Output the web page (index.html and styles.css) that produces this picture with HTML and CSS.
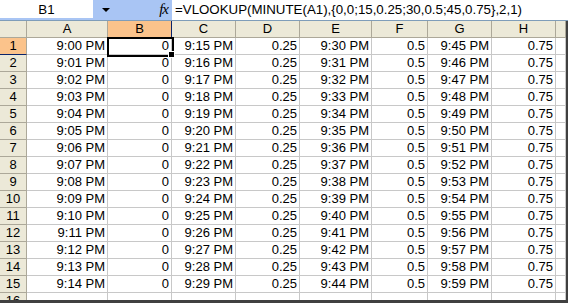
FILE: index.html
```html
<!DOCTYPE html>
<html lang="en">
<head>
    <meta charset="UTF-8">
    <title>Book1 - VLOOKUP minutes</title>
    <link rel="stylesheet" href="styles.css">
</head>
<body>
    <div class="formula-bar">
        <div class="name-box">B1</div>
        <div class="name-drop"><span class="arrow"></span></div>
        <div class="fx">fx</div>
        <div class="formula">=VLOOKUP(MINUTE(A1),{0,0;15,0.25;30,0.5;45,0.75},2,1)</div>
    </div>

    <div class="sheet" id="sheet">
        <div class="corner"></div>
        <div class="col-head">A</div>
        <div class="col-head selected">B</div>
        <div class="col-head">C</div>
        <div class="col-head">D</div>
        <div class="col-head">E</div>
        <div class="col-head">F</div>
        <div class="col-head">G</div>
        <div class="col-head">H</div>
        <div class="col-head"></div>
    </div>

    <script>
        // build the 15 data rows plus the clipped 16th
        const sheet = document.getElementById('sheet');
        const values = [0, 0.25, 0.5, 0.75];

        function cell(text, cls) {
            const el = document.createElement('div');
            el.className = cls;
            el.textContent = text;
            sheet.appendChild(el);
        }

        for (let r = 1; r <= 16; r++) {
            cell(r, r === 1 ? 'row-head selected' : 'row-head');
            for (let block = 0; block < 4; block++) {
                if (r === 16) {
                    cell('', 'cell');
                    cell('', 'cell');
                    continue;
                }
                const min = block * 15 + r - 1;
                const time = '9:' + String(min).padStart(2, '0') + ' PM';
                cell(time, 'cell');
                const cls = (r === 1 && block === 0) ? 'cell active' : 'cell';
                cell(values[block], cls);
            }
            cell('', 'cell');
        }
    </script>
</body>
</html>
```

FILE: styles.css
```css
body {
    margin: 0;
    width: 568px;
    height: 303px;
    overflow: hidden;
    font-family: 'Liberation Sans', Arial, sans-serif;
    font-size: 13px;
    color: #000;
    background-color: #fff;
}

/* formula bar */
.formula-bar {
    display: flex;
    height: 20px;
    background-color: #a9c5f4;
    border-bottom: 1px solid #7f9db9;
    font-size: 13.3px;
}

.name-box {
    width: 93px;
    height: 18px;
    background-color: #fff;
    text-align: center;
    line-height: 19px;
}

.name-drop {
    width: 25px;
    display: flex;
    justify-content: center;
    align-items: center;
    padding-bottom: 1px;
}

.arrow {
    width: 0;
    height: 0;
    border-left: 4px solid transparent;
    border-right: 4px solid transparent;
    border-top: 4px solid #000;
}

.fx {
    width: 50px;
    padding-right: 4px;
    text-align: right;
    font-family: 'Liberation Serif', serif;
    font-style: italic;
    font-size: 15px;
    line-height: 19px;
    letter-spacing: -1px;
}

.formula {
    flex: 1;
    background-color: #fff;
    padding-left: 3px;
    line-height: 19px;
    white-space: nowrap;
    overflow: hidden;
}

/* sheet grid */
.sheet {
    display: grid;
    grid-template-columns: 27px 81px 64px 64px 64px 72px 56px 64px 64px 1fr;
    grid-auto-rows: 17px;
    height: 279px;
    overflow: hidden;
    border-right: 2px solid #404040;
    border-bottom: 3px solid #404040;
}

.sheet > div {
    box-sizing: border-box;
    line-height: 16px;
    white-space: nowrap;
    overflow: hidden;
}

.corner,
.col-head,
.row-head {
    background-color: #ece9d8;
    border-right: 1px solid #aca899;
    border-bottom: 1px solid #aca899;
    text-align: center;
}

.col-head.selected,
.row-head.selected {
    background-color: #fbc38b;
}

.col-head.selected {
    border-right-color: #0a246a;
}

.row-head.selected {
    border-bottom-color: #0a246a;
}

.cell {
    border-right: 1px solid #c8c8c8;
    border-bottom: 1px solid #c8c8c8;
    text-align: right;
    padding-right: 2px;
}

.sheet > .active {
    position: relative;
    overflow: visible;
}

/* selection frame and fill handle */
.active::before {
    content: '';
    position: absolute;
    top: -1px;
    left: -1px;
    right: -3px;
    bottom: -3px;
    border: 2px solid #000;
}

.active::after {
    content: '';
    position: absolute;
    right: -4px;
    bottom: -4px;
    width: 5px;
    height: 5px;
    background-color: #000;
    border: 1px solid #fff;
}
```
